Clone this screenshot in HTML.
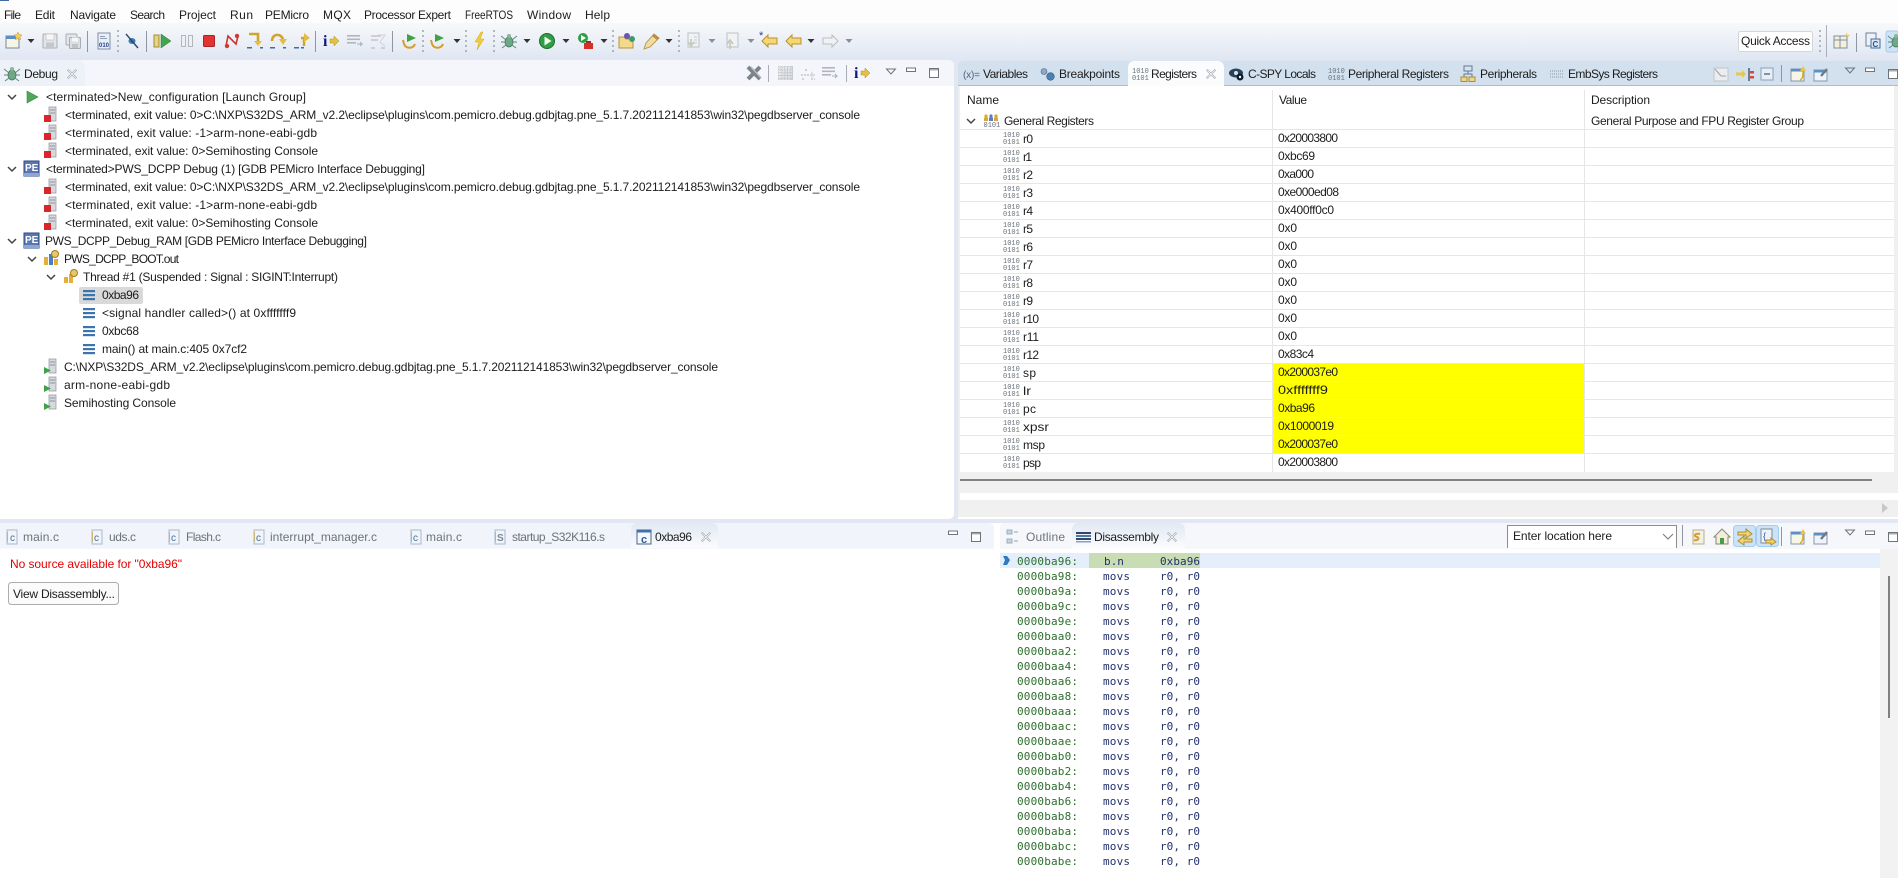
<!DOCTYPE html>
<html lang="en"><head><meta charset="utf-8"><title>Debug - S32DS</title>
<style>
html,body{margin:0;padding:0;background:#fff;width:1898px;height:878px;overflow:hidden}
svg{display:block}
text{font-family:"Liberation Sans",sans-serif;font-size:12px;fill:#1c1c1c;white-space:pre}
.g{fill:#6c7378}
.m text,text.m{font-family:"DejaVu Sans Mono",monospace;font-size:11px}
.ad{fill:#2d6e2d}.mn{fill:#22306e}
</style></head><body>
<svg xmlns="http://www.w3.org/2000/svg" width="1898" height="878" viewBox="0 0 1898 878">
<defs>
<linearGradient id="tb" x1="0" y1="0" x2="0" y2="1"><stop offset="0" stop-color="#f7f8fb"/><stop offset="1" stop-color="#dfe6f2"/></linearGradient>
<linearGradient id="at" x1="0" y1="0" x2="0" y2="1"><stop offset="0" stop-color="#e2e9f3"/><stop offset="1" stop-color="#fbfcfe"/></linearGradient>
<g id="dd"><polygon points="-3.5,-2 3.5,-2 0,2" fill="#333"/></g>
<g id="ddg"><polygon points="-3.5,-2 3.5,-2 0,2" fill="#8a8f96"/></g>
<g id="grip"><rect x="-.8" y="-11" width="1.6" height="2" fill="#a5a9af"/><rect x="-.8" y="-6" width="1.6" height="2" fill="#a5a9af"/><rect x="-.8" y="-1" width="1.6" height="2" fill="#a5a9af"/><rect x="-.8" y="4" width="1.6" height="2" fill="#a5a9af"/><rect x="-.8" y="9" width="1.6" height="2" fill="#a5a9af"/></g>
<g id="new"><rect x="-7" y="-5" width="13" height="12" fill="#f7f6e6" stroke="#74869f"/><rect x="-7" y="-5" width="13" height="3" fill="#5c8fc6"/><polygon points="5,-9 6.2,-6.4 9,-6 7,-4 7.5,-1.2 5,-2.6 2.5,-1.2 3,-4 1,-6 3.8,-6.4" fill="#f4cf55" stroke="#b9963a" stroke-width=".5"/></g>
<g id="save"><rect x="-7" y="-7" width="14" height="14" rx="1" fill="#e3e5e9" stroke="#a9adb3"/><rect x="-4" y="-7" width="8" height="6" fill="#f6f6f6" stroke="#b8bbc0" stroke-width=".6"/><rect x="-4" y="1.5" width="8" height="5.5" fill="#c4c7cc"/></g>
<g id="saveall"><rect x="-7" y="-7" width="11" height="11" rx="1" fill="#e3e5e9" stroke="#a9adb3"/><rect x="-3.5" y="-3.5" width="11" height="11" rx="1" fill="#dcdee2" stroke="#a9adb3"/><rect x="-1" y="-3.5" width="6" height="4" fill="#f6f6f6"/><rect x="-1" y="3" width="6" height="4" fill="#bfc2c7"/></g>
<g id="f010"><rect x="-6" y="-8" width="12" height="16" fill="#e9eff6" stroke="#7e8ea6"/><rect x="-4" y="-5" width="5" height="1" fill="#8fa0b5"/><rect x="-4" y="-3" width="7" height="1" fill="#8fa0b5"/><text x="-5" y="6" style="font-size:6px;font-weight:bold;fill:#25408f">010</text></g>
<g id="skip"><ellipse cx="0" cy="0" rx="3.5" ry="3" fill="#3e78b4"/><path d="M-6,-7 L6,7" stroke="#27476f" stroke-width="1.4"/></g>
<g id="resume"><rect x="-9" y="-6" width="5" height="12" fill="#e8d47c" stroke="#9c8b3c"/><polygon points="-2,-7 8,0 -2,7" fill="#44a44c" stroke="#2e7d36" stroke-width=".5"/></g>
<g id="susp"><rect x="-5.5" y="-5.5" width="4" height="11" fill="#eef0f3" stroke="#b3b7bd"/><rect x="1.5" y="-5.5" width="4" height="11" fill="#eef0f3" stroke="#b3b7bd"/></g>
<g id="stop"><rect x="-5.5" y="-5.5" width="11" height="11" rx="1" fill="#e33232" stroke="#a92424"/></g>
<g id="disc"><path d="M-6,5 L-4,-5 L4,3 L6,-5" stroke="#d2342c" stroke-width="1.6" fill="none"/><circle cx="-5" cy="5" r="2.2" fill="#cf3a30"/><circle cx="5" cy="-5" r="2.2" fill="#cf3a30"/></g>
<g id="sinto"><path d="M-6,-6 H3 V2" stroke="#d0a52b" stroke-width="2.6" fill="none"/><polygon points="-1,1 7,1 3,6" fill="#e5bd3e"/><rect x="-8" y="7" width="5" height="1.5" fill="#3b6ea8"/><rect x="5" y="7" width="3" height="1.5" fill="#3b6ea8"/></g>
<g id="sover"><path d="M-6,1 C-6,-7 4,-7 5,0" stroke="#d0a52b" stroke-width="2.6" fill="none"/><polygon points="1,-1 9,-1 5,5" fill="#e5bd3e"/><rect x="-8" y="7" width="5" height="1.5" fill="#3b6ea8"/><rect x="5" y="7" width="3" height="1.5" fill="#3b6ea8"/></g>
<g id="sret"><path d="M2,6 V-2 H-1" stroke="#d0a52b" stroke-width="2.4" fill="none"/><polygon points="1,-7 7,-2 1,2" fill="#e5bd3e" transform="translate(1,0)"/><rect x="-8" y="7" width="5" height="1.5" fill="#3b6ea8"/><rect x="-1" y="7" width="3" height="1.5" fill="#3b6ea8"/></g>
<g id="iarr"><text x="-8" y="5" style="font-family:'Liberation Serif',serif;font-size:16px;font-weight:bold;fill:#15157e">i</text><polygon points="-1,-2 3,-2 3,-5 8,0 3,5 3,2 -1,2" fill="#e2c33e" stroke="#a98e2c" stroke-width=".5"/></g>
<g id="lines"><rect x="-8" y="-6" width="13" height="1.6" fill="#b2b6bc"/><rect x="-8" y="-2.5" width="13" height="1.6" fill="#b2b6bc"/><rect x="-8" y="1" width="9" height="1.6" fill="#b2b6bc"/><path d="M2,3 h5 l-2,-2 M7,3 l-2,2" stroke="#aab0b8" fill="none"/></g>
<g id="drop"><path d="M-7,-5 H3 M-7,-1 H0 M-7,7 H-3 M3,7 H7" stroke="#c2c5ca" stroke-width="1.4"/><path d="M0,-6 L7,-6 L2,1 L7,5" stroke="#d0d2d6" fill="none"/></g>
<g id="ref"><path d="M5,3 C3,8 -4,8 -6,3 L-7,-1" stroke="#cf9f2c" stroke-width="2" fill="none"/><polygon points="-3,-7 6,-3 -3,1" fill="#3da345"/></g>
<g id="bolt"><polygon points="2,-9 -4,1 0,1 -2,9 5,-2 1,-2 4,-9" fill="#f2cf2e" stroke="#d3a71f" stroke-width=".5"/></g>
<g id="bug"><ellipse rx="4" ry="5" cy="1" fill="#6fa886" stroke="#3f7a5c" stroke-width=".8"/><circle cy="-5" r="2" fill="#8fb49a"/><path d="M-8,-5 L-3,-1 M-8,1 H-4 M-7,7 L-3,4 M8,-5 L3,-1 M8,1 H4 M7,7 L3,4" stroke="#5e8573" stroke-width=".9"/></g>
<g id="run"><circle r="7.5" fill="#2f9e44" stroke="#1f6e2f"/><polygon points="-2.5,-4.5 4.5,0 -2.5,4.5" fill="#f2f8f0"/></g>
<g id="ext"><circle cx="-2" cy="-3" r="5" fill="#2f9e44"/><polygon points="-4,-6 1,-3 -4,0" fill="#fff"/><rect x="-1" y="2" width="9" height="6" fill="#d33028"/><rect x="1" y="0" width="5" height="2" fill="#a52a22"/></g>
<g id="open"><path d="M-8,7 V-4 H-3 L-1,-2 H6 V7 Z" fill="#f3d98a" stroke="#b8923e"/><circle cx="0" cy="-5" r="3" fill="#6a55b0"/><circle cx="5" cy="-2" r="3" fill="#3f9a6c"/></g>
<g id="pen"><polygon points="-7,8 -5,2 3,-7 8,-3 -1,6" fill="#f1dda0" stroke="#b89a55"/><polygon points="3,-7 8,-3 6,-1 1,-5" fill="#b98b45"/></g>
<g id="nxt"><rect x="-5" y="-8" width="11" height="14" fill="#f0f2f4" stroke="#bcc2c8"/><path d="M-2,-2 V3 M-5,1 L-2,5 L1,1" stroke="#c3c8b8" stroke-width="1.6" fill="none"/><path d="M1,-4 H4 M1,-1 H4 M1,2 H4" stroke="#c4c9ce"/></g>
<g id="prv"><rect x="-5" y="-8" width="11" height="14" fill="#f0f2f4" stroke="#bcc2c8"/><path d="M-2,8 V1 M-5,3 L-2,-1 L1,3" stroke="#c3c8b8" stroke-width="1.6" fill="none"/></g>
<g id="last"><polygon points="8,-3 -1,-3 -1,-6 -7,0 -1,6 -1,3 8,3" fill="#f5d874" stroke="#b8922e"/><text x="-10" y="-2" style="font-size:11px;fill:#26457e">*</text></g>
<g id="back"><polygon points="8,-3 -1,-3 -1,-6 -7,0 -1,6 -1,3 8,3" fill="#f5d874" stroke="#b8922e"/></g>
<g id="fwd"><polygon points="-8,-3 1,-3 1,-6 7,0 1,6 1,3 -8,3" fill="#f1f2f4" stroke="#b9bdc3"/></g>
<g id="x"><path d="M-4.5,-3.5 L-3.5,-4.5 L0,-1 L3.5,-4.5 L4.5,-3.5 L1,0 L4.5,3.5 L3.5,4.5 L0,1 L-3.5,4.5 L-4.5,3.5 L-1,0 Z" fill="#fcfcfd" stroke="#a9aeb4" stroke-width=".7"/></g>
<g id="tri"><polygon points="-4.5,-3 4.5,-3 0,2" fill="none" stroke="#6f747a"/></g>
<g id="min"><rect x="-4.5" y="-2" width="9" height="3.5" fill="#fff" stroke="#6f747a"/></g>
<g id="max"><rect x="-4.5" y="-4.5" width="9" height="9" fill="#fff" stroke="#6f747a"/><rect x="-4.5" y="-4.5" width="9" height="2" fill="#6f747a" opacity=".6"/></g>
<g id="rmall"><path d="M-6,-6 L6,6 M6,-6 L-6,6" stroke="#7d838a" stroke-width="4"/><path d="M-3,-6 L7,5" stroke="#b4b9bf" stroke-width="1.5"/></g>
<g id="hatch"><rect x="-7" y="-7" width="15" height="14" fill="#c7cbcf"/><path d="M-7,-5 H8 M-7,-2 H8 M-7,1 H8 M-7,4 H8 M-5,-7 V7 M-2,-7 V7 M1,-7 V7 M4,-7 V7" stroke="#f5f6f9" stroke-width=".9" stroke-dasharray="1.5 1"/></g>
<g id="tabarr"><path d="M-7,2 H7 M-2,-4 V-1 M-6,6 H-3 M3,6 H7" stroke="#b9bdc2" stroke-width="1.3" fill="none" stroke-dasharray="2 1"/><polygon points="3,-2 7,2 3,5" fill="#d9dbde"/></g>
<g id="rdbox"><rect x="-7" y="-6" width="12" height="12" fill="#e8eef5" stroke="#8ca0b8"/><rect x="-4" y="-.7" width="6" height="1.4" fill="#546a86"/></g>
<g id="tarrow"><rect x="-9" y="-1.5" width="7" height="3" fill="#e5c84e"/><polygon points="-3,-4 1,0 -3,4" fill="#e5c84e"/><rect x="3" y="-6" width="2" height="13" fill="#697d95"/><rect x="5" y="-3" width="4" height="2.5" fill="#d04b3f"/><rect x="5" y="2" width="4" height="2.5" fill="#d04b3f"/></g>
<g id="nwin"><rect x="-7" y="-5" width="13" height="12" fill="#f7f6e6" stroke="#8396ad"/><rect x="-7" y="-5" width="13" height="2.5" fill="#5c8fc6"/><path d="M2,6 C5,5 5,1 5,-3" stroke="#d9b034" stroke-width="1.6" fill="none"/><polygon points="2,-3 5,-8 8,-3" fill="#eac34a"/></g>
<g id="pinw"><rect x="-7" y="-4" width="13" height="11" fill="#eef4fa" stroke="#8396ad"/><rect x="-7" y="-4" width="13" height="2.5" fill="#5c8fc6"/><path d="M0,2 L6,-5" stroke="#727880" stroke-width="2.4"/></g>
<g id="file"><rect x="-5" y="-7" width="10" height="14" fill="#f2f5f8" stroke="#a9b8ca"/><rect x="-5" y="-5" width="1" height="10" fill="#c8b777"/></g>
<g id="activef"><rect x="-7" y="-7" width="14" height="14" fill="#f4f7fb" stroke="#49688f"/><rect x="-7" y="-7" width="14" height="2.5" fill="#3e72ad"/></g>
<g id="reg"><text x="-7.5" y="-.8" style="font-family:'Liberation Mono',monospace;font-size:7px;fill:#69727e">1010</text><text x="-7.5" y="5.8" style="font-family:'Liberation Mono',monospace;font-size:7px;fill:#69727e">0101</text></g>
<g id="grp"><circle cx="-5" cy="-5" r="1.6" fill="#d8a73b"/><circle cx="0" cy="-5" r="1.6" fill="#5b80b6"/><circle cx="5" cy="-5" r="1.6" fill="#d8a73b"/><rect x="-7" y="-3.5" width="4" height="3.5" fill="#d8a73b"/><rect x="-2" y="-3.5" width="4" height="3.5" fill="#5b80b6"/><rect x="3" y="-3.5" width="4" height="3.5" fill="#d8a73b"/><text x="-7.5" y="6" style="font-family:'Liberation Mono',monospace;font-size:7px;fill:#69727e">0101</text></g>
<g id="chev"><polyline points="-4,-2 0,2 4,-2" fill="none" stroke="#444" stroke-width="1.5"/></g>
<g id="tgreen"><polygon points="-5,-6 6,0 -5,6" fill="#4ea656" stroke="#3c8a46" stroke-width=".6"/></g>
<g id="tred"><rect x="-2" y="-8" width="7" height="14" fill="#d6d9dd" stroke="#8d9399" stroke-width=".7"/><path d="M-1,-5 H4 M-1,-2 H4" stroke="#8d9399"/><rect x="-7" y="0" width="7" height="7" fill="#d8262c"/></g>
<g id="tgrn"><rect x="-2" y="-8" width="7" height="14" fill="#d6d9dd" stroke="#8d9399" stroke-width=".7"/><path d="M-1,-5 H4 M-1,-2 H4" stroke="#8d9399"/><polygon points="-7,0 0,3.5 -7,7" fill="#41a04a"/></g>
<g id="pe"><rect x="-8" y="-8" width="15" height="15" fill="#5b78b4" stroke="#2d4a85"/><text x="-7" y="2" style="font-size:10px;font-weight:bold;fill:#fff">PE</text><rect x="-8" y="4" width="15" height="3" fill="#8ea6d0"/></g>
<g id="proc"><rect x="-7" y="-2" width="4" height="8" fill="#e4b03a"/><rect x="-2" y="-5" width="4" height="11" fill="#4d7fbc"/><rect x="3" y="0" width="4" height="6" fill="#e4b03a"/><circle cx="4" cy="-5" r="3.5" fill="#e9c66a" stroke="#a47b1e"/></g>
<g id="thr"><rect x="-6" y="0" width="4" height="6" fill="#e4b03a"/><rect x="-1" y="-3" width="4" height="9" fill="#e4b03a"/><circle cx="4" cy="-4" r="3.5" fill="#e9c66a" stroke="#a47b1e"/></g>
<g id="frame"><rect x="-6" y="-5" width="12" height="2.2" fill="#3e74ac"/><rect x="-6" y="-1" width="12" height="2.2" fill="#3e74ac"/><rect x="-6" y="3" width="12" height="2.2" fill="#3e74ac"/></g>
<g id="persp"><rect x="-7" y="-5" width="13" height="12" fill="#f5f0d8" stroke="#7e8ea6"/><path d="M-7,-1 H6 M-1,-5 V7" stroke="#7e8ea6"/><polygon points="5,-9 6.2,-6.4 9,-6 7,-4 5,-5" fill="#f0ca50"/></g>
<g id="pc"><rect x="-7" y="-8" width="10" height="13" fill="#eef2f7" stroke="#6e7f96"/><rect x="-2" y="-2" width="9" height="9" fill="#dbe7f4" stroke="#3e6fa6"/><text x="-.5" y="6" style="font-size:8px;font-weight:bold;fill:#23548c">C</text></g>
<g id="src"><rect x="-4" y="-7" width="11" height="14" fill="#f2efe4" stroke="#b9ad8a"/><path d="M3,-3 C-2,-4 -4,-1 0,0 C3,1 1,4 -3,3" stroke="#d39f2d" stroke-width="2" fill="none"/></g>
<g id="home"><polygon points="0,-8 8,0 6,0 6,7 -6,7 -6,0 -8,0" fill="#f1eee0" stroke="#8a8a6a"/><rect x="-2" y="1" width="4" height="6" fill="#4b9d45"/></g>
<g id="sync"><polygon points="-8,-3 0,-3 0,-6 6,-1 0,3 0,0 -8,0" fill="#f3d46e" stroke="#b08c2e" transform="translate(1,-2)"/><polygon points="8,3 0,3 0,0 -6,5 0,9 0,6 8,6" fill="#f3d46e" stroke="#b08c2e" transform="translate(-1,-1)"/></g>
<g id="syncd"><rect x="-6" y="-8" width="11" height="14" fill="#eef2f7" stroke="#7a8ba0"/><text x="-4" y="2" style="font-size:9px;fill:#2b5ea0">{</text><polygon points="-1,3 4,3 4,1 9,5 4,8 4,6 -1,6" fill="#f3d46e" stroke="#b08c2e"/></g>
<g id="outl"><rect x="-6" y="-7" width="5" height="4" fill="#c8d3df" stroke="#9daebd"/><rect x="-6" y="2" width="5" height="4" fill="#c8d3df" stroke="#9daebd"/><path d="M1,-5 H5 M1,4 H5" stroke="#b3bdc8" stroke-width="1.5"/></g>
<g id="dis"><rect x="-7" y="-5" width="15" height="2" fill="#33456b"/><rect x="-7" y="-2" width="15" height="2" fill="#4d79a8"/><rect x="-7" y="1" width="15" height="2" fill="#33456b"/><rect x="-7" y="4" width="15" height="1.5" fill="#8aa0bd"/></g>
<g id="bp"><circle cx="-3" cy="-2.5" r="3" fill="#90a8c4" stroke="#4d6d93" stroke-width=".6"/><circle cx="3.5" cy="2.5" r="3.8" fill="#4b80b0" stroke="#2e5a85" stroke-width=".6"/></g>
<g id="eye"><ellipse cy="-1" rx="7" ry="4.5" fill="#28415c"/><circle cy="-1" r="2" fill="#dce6ef"/><circle cx="4" cy="3" r="3.5" fill="#0e1c2c"/><circle cx="4" cy="3" r="1.2" fill="#fff"/></g>
<g id="perif"><rect x="-4" y="-8" width="8" height="5" fill="#d8e3ef" stroke="#5f7a98"/><path d="M0,-3 V0 M-4,3 V0 H4 V3" stroke="#5f7a98" fill="none"/><rect x="-7" y="3" width="6" height="4.5" fill="#f2d783" stroke="#ae8a30"/><rect x="1" y="3" width="6" height="4.5" fill="#f2d783" stroke="#ae8a30"/></g>
<g id="emb"><path d="M-7,-3 H7 M-7,0 H7 M-7,3 H7" stroke="#9298a0" stroke-width="1.1" stroke-dasharray="1 1"/></g>
<g id="bgtbl"><rect x="-7" y="-6" width="14" height="13" fill="#ecedef" stroke="#c0c4c9"/><path d="M-6,-5 L0,2 M0,2 H5" stroke="#9aa0a8"/></g>
</defs>

<!-- base -->
<rect width="1898" height="878" fill="#fff"/>
<rect y="0" width="1898" height="23" fill="#fdfdfd"/>
<rect x="0" y="0" width="9" height="1" fill="#3e6aa8"/>
<rect y="23" width="1898" height="500" fill="#e1e7f3"/>
<rect y="23" width="1898" height="38" fill="url(#tb)"/>

<!-- menu -->
<text x="4" y="19" textLength="17">File</text>
<text x="35" y="19" textLength="20">Edit</text>
<text x="70" y="19" textLength="46">Navigate</text>
<text x="130" y="19" textLength="35">Search</text>
<text x="179" y="19" textLength="37">Project</text>
<text x="230" y="19" textLength="23">Run</text>
<text x="265" y="19" textLength="44">PEMicro</text>
<text x="323" y="19" textLength="28">MQX</text>
<text x="364" y="19" textLength="87">Processor Expert</text>
<text x="465" y="19" textLength="48" lengthAdjust="spacingAndGlyphs">FreeRTOS</text>
<text x="527" y="19" textLength="44">Window</text>
<text x="585" y="19" textLength="25">Help</text>

<!-- main toolbar -->
<use href="#new" x="13" y="41"/><use href="#dd" x="31" y="41"/><use href="#save" x="50" y="41"/><use href="#saveall" x="73" y="41"/>
<rect x="87" y="31" width="1" height="21" fill="#8f96a0"/>
<use href="#f010" x="104" y="41"/><use href="#grip" x="118" y="41"/><use href="#skip" x="132" y="41"/>
<rect x="146" y="31" width="1" height="21" fill="#8f96a0"/>
<use href="#resume" x="163" y="41"/><use href="#susp" x="187" y="41"/><use href="#stop" x="209" y="41"/><use href="#disc" x="232" y="41"/>
<use href="#sinto" x="255" y="40"/><use href="#sover" x="278" y="40"/><use href="#sret" x="302" y="40"/>
<rect x="315" y="31" width="1" height="21" fill="#8f96a0"/>
<use href="#iarr" x="331" y="41"/><use href="#lines" x="355" y="41"/><use href="#drop" x="378" y="41"/>
<rect x="392" y="31" width="1" height="21" fill="#8f96a0"/>
<use href="#ref" x="410" y="41"/><use href="#grip" x="423" y="41"/><use href="#ref" x="438" y="41"/><use href="#dd" x="457" y="41"/><use href="#grip" x="466" y="41"/>
<use href="#bolt" x="479" y="41"/><use href="#grip" x="494" y="41"/>
<use href="#bug" x="509" y="41"/><use href="#dd" x="527" y="41"/><use href="#run" x="547" y="41"/><use href="#dd" x="566" y="41"/>
<use href="#ext" x="585" y="41"/><use href="#dd" x="604" y="41"/><use href="#grip" x="613" y="41"/>
<use href="#open" x="627" y="41"/><use href="#pen" x="651" y="41"/><use href="#dd" x="669" y="41"/><use href="#grip" x="679" y="41"/>
<use href="#nxt" x="693" y="41"/><use href="#ddg" x="712" y="41"/><use href="#prv" x="732" y="41"/><use href="#ddg" x="751" y="41"/>
<use href="#last" x="769" y="41"/><use href="#back" x="793" y="41"/><use href="#dd" x="811" y="41"/><use href="#fwd" x="831" y="41"/><use href="#ddg" x="849" y="41"/>

<rect x="1738.5" y="31.5" width="74" height="20" rx="2" fill="#fff" stroke="#d3d6db"/>
<text x="1741" y="45" textLength="69">Quick Access</text>
<use href="#grip" x="1820" y="41"/>
<rect x="1826" y="25" width="1" height="32" fill="#aab0b8"/>
<use href="#persp" x="1841" y="41"/>
<rect x="1856" y="33" width="1" height="19" fill="#8f96a0"/>
<use href="#pc" x="1873" y="41"/>
<rect x="1886" y="31" width="12" height="21" rx="2" fill="#cde3f7" stroke="#a9cbe8"/>
<use href="#bug" x="1896" y="41"/>

<!-- Debug pane -->
<path d="M0,60 H948 Q954,60 954,66 V513 Q954,519 948,519 H0 Z" fill="#fff"/>
<path d="M0,60 H948 Q954,60 954,66 V86 H0 Z" fill="#f4f6fb"/>
<path d="M0,60 H76 Q85,60 85,69 V86 H0 Z" fill="#edf1f8"/>
<use href="#bug" x="12" y="74"/>
<text x="24" y="78" textLength="34">Debug</text>
<use href="#x" x="72" y="74"/>
<use href="#rmall" x="754" y="73"/>
<rect x="768" y="65" width="1" height="17" fill="#a8adb3"/>
<use href="#hatch" x="785" y="73"/><use href="#tabarr" x="808" y="73"/><use href="#lines" x="830" y="73"/>
<rect x="846" y="65" width="1" height="17" fill="#a8adb3"/>
<use href="#iarr" x="862" y="73"/><use href="#tri" x="891" y="72"/><use href="#min" x="911" y="70"/><use href="#max" x="934" y="73"/>

<!-- tree -->
<use href="#chev" x="12" y="97"/><use href="#tgreen" x="32" y="97"/>
<text x="46" y="101" textLength="260">&lt;terminated&gt;New_configuration [Launch Group]</text>
<use href="#tred" x="51" y="115"/><text x="65" y="119" textLength="795">&lt;terminated, exit value: 0&gt;C:\NXP\S32DS_ARM_v2.2\eclipse\plugins\com.pemicro.debug.gdbjtag.pne_5.1.7.202112141853\win32\pegdbserver_console</text>
<use href="#tred" x="51" y="133"/><text x="65" y="137" textLength="252">&lt;terminated, exit value: -1&gt;arm-none-eabi-gdb</text>
<use href="#tred" x="51" y="151"/><text x="65" y="155" textLength="253">&lt;terminated, exit value: 0&gt;Semihosting Console</text>
<use href="#chev" x="12" y="169"/><use href="#pe" x="32" y="169"/>
<text x="46" y="173" textLength="379">&lt;terminated&gt;PWS_DCPP Debug (1) [GDB PEMicro Interface Debugging]</text>
<use href="#tred" x="51" y="187"/><text x="65" y="191" textLength="795">&lt;terminated, exit value: 0&gt;C:\NXP\S32DS_ARM_v2.2\eclipse\plugins\com.pemicro.debug.gdbjtag.pne_5.1.7.202112141853\win32\pegdbserver_console</text>
<use href="#tred" x="51" y="205"/><text x="65" y="209" textLength="252">&lt;terminated, exit value: -1&gt;arm-none-eabi-gdb</text>
<use href="#tred" x="51" y="223"/><text x="65" y="227" textLength="253">&lt;terminated, exit value: 0&gt;Semihosting Console</text>
<use href="#chev" x="12" y="241"/><use href="#pe" x="32" y="241"/>
<text x="45" y="245" textLength="322">PWS_DCPP_Debug_RAM [GDB PEMicro Interface Debugging]</text>
<use href="#chev" x="32" y="259"/><use href="#proc" x="51" y="259"/>
<text x="64" y="263" textLength="115">PWS_DCPP_BOOT.out</text>
<use href="#chev" x="51" y="277"/><use href="#thr" x="70" y="277"/>
<text x="83" y="281" textLength="255">Thread #1 (Suspended : Signal : SIGINT:Interrupt)</text>
<rect x="79" y="287" width="64" height="17" rx="2" fill="#d9d9d9"/>
<use href="#frame" x="89" y="295"/><text x="102" y="299" textLength="37">0xba96</text>
<use href="#frame" x="89" y="313"/><text x="102" y="317" textLength="194">&lt;signal handler called&gt;() at 0xfffffff9</text>
<use href="#frame" x="89" y="331"/><text x="102" y="335" textLength="37">0xbc68</text>
<use href="#frame" x="89" y="349"/><text x="102" y="353" textLength="145">main() at main.c:405 0x7cf2</text>
<use href="#tgrn" x="51" y="367"/><text x="64" y="371" textLength="654">C:\NXP\S32DS_ARM_v2.2\eclipse\plugins\com.pemicro.debug.gdbjtag.pne_5.1.7.202112141853\win32\pegdbserver_console</text>
<use href="#tgrn" x="51" y="385"/><text x="64" y="389" textLength="106">arm-none-eabi-gdb</text>
<use href="#tgrn" x="51" y="403"/><text x="64" y="407" textLength="112">Semihosting Console</text>

<!-- Registers pane -->
<path d="M958,66 Q958,61 964,61 H1898 V517 H958 Z" fill="#f0f0f0"/>
<path d="M958,66 Q958,61 964,61 H1898 V86 H958 Z" fill="#d3e1ef"/>
<rect x="958" y="85" width="940" height="1" fill="#aebccd"/>
<path d="M1128,86 V68 Q1128,61 1135,61 H1217 Q1224,61 1224,68 V86 Z" fill="#fafcfe"/>
<rect x="960" y="86" width="934" height="386" fill="#fff"/>
<rect x="960" y="493" width="938" height="7" fill="#fff"/>
<rect y="517" x="958" width="940" height="2" fill="#fff"/>
<text x="963" y="78" textLength="17" style="font-size:10px;fill:#52647a">(x)=</text>
<text x="983" y="78" textLength="45">Variables</text>
<use href="#bp" x="1047" y="74"/><text x="1059" y="78" textLength="61">Breakpoints</text>
<use href="#reg" x="1139.5" y="74"/><text x="1151" y="78" textLength="46">Registers</text><use href="#x" x="1211" y="74"/>
<use href="#eye" x="1236" y="74"/><text x="1248" y="78" textLength="68">C-SPY Locals</text>
<use href="#reg" x="1335.5" y="74"/><text x="1348" y="78" textLength="101">Peripheral Registers</text>
<use href="#perif" x="1468" y="74"/><text x="1480" y="78" textLength="57">Peripherals</text>
<use href="#emb" x="1557" y="74"/><text x="1568" y="78" textLength="90">EmbSys Registers</text>
<use href="#bgtbl" x="1721" y="74"/><use href="#tarrow" x="1745" y="74"/><use href="#rdbox" x="1768" y="74"/>
<rect x="1781" y="65" width="1" height="17" fill="#8f96a0"/>
<use href="#nwin" x="1798" y="74"/><use href="#pinw" x="1821" y="74"/>
<use href="#tri" x="1850" y="71"/><use href="#min" x="1870" y="70"/><use href="#max" x="1893" y="74"/>

<text x="967" y="104" textLength="32">Name</text><text x="1279" y="104" textLength="28">Value</text><text x="1591" y="104" textLength="59">Description</text>
<use href="#chev" x="971" y="121"/><use href="#grp" x="991" y="121"/>
<text x="1004" y="125" textLength="90">General Registers</text>
<text x="1591" y="125" textLength="213">General Purpose and FPU Register Group</text>
<rect x="1272" y="363" width="313" height="91" fill="#ffff00"/>
<g fill="#e6e6e6">
<rect x="960" y="129" width="934" height="1"/><rect x="960" y="147" width="934" height="1"/><rect x="960" y="165" width="934" height="1"/><rect x="960" y="183" width="934" height="1"/><rect x="960" y="201" width="934" height="1"/><rect x="960" y="219" width="934" height="1"/><rect x="960" y="237" width="934" height="1"/><rect x="960" y="255" width="934" height="1"/><rect x="960" y="273" width="934" height="1"/><rect x="960" y="291" width="934" height="1"/><rect x="960" y="309" width="934" height="1"/><rect x="960" y="327" width="934" height="1"/><rect x="960" y="345" width="934" height="1"/><rect x="960" y="363" width="934" height="1"/><rect x="960" y="381" width="934" height="1"/><rect x="960" y="399" width="934" height="1"/><rect x="960" y="417" width="934" height="1"/><rect x="960" y="435" width="934" height="1"/><rect x="960" y="453" width="934" height="1"/>
<rect x="1272" y="90" width="1" height="382"/><rect x="1584" y="90" width="1" height="382"/>
</g>
<use href="#reg" x="1010.5" y="138"/><text x="1023" y="143" textLength="10">r0</text><text x="1278" y="142" textLength="60">0x20003800</text>
<use href="#reg" x="1010.5" y="156"/><text x="1023" y="161" textLength="9">r1</text><text x="1278" y="160" textLength="37">0xbc69</text>
<use href="#reg" x="1010.5" y="174"/><text x="1023" y="179" textLength="10">r2</text><text x="1278" y="178" textLength="36">0xa000</text>
<use href="#reg" x="1010.5" y="192"/><text x="1023" y="197" textLength="10">r3</text><text x="1278" y="196" textLength="61">0xe000ed08</text>
<use href="#reg" x="1010.5" y="210"/><text x="1023" y="215" textLength="10">r4</text><text x="1278" y="214" textLength="56">0x400ff0c0</text>
<use href="#reg" x="1010.5" y="228"/><text x="1023" y="233" textLength="10">r5</text><text x="1278" y="232" textLength="19">0x0</text>
<use href="#reg" x="1010.5" y="246"/><text x="1023" y="251" textLength="10">r6</text><text x="1278" y="250" textLength="19">0x0</text>
<use href="#reg" x="1010.5" y="264"/><text x="1023" y="269" textLength="10">r7</text><text x="1278" y="268" textLength="19">0x0</text>
<use href="#reg" x="1010.5" y="282"/><text x="1023" y="287" textLength="10">r8</text><text x="1278" y="286" textLength="19">0x0</text>
<use href="#reg" x="1010.5" y="300"/><text x="1023" y="305" textLength="10">r9</text><text x="1278" y="304" textLength="19">0x0</text>
<use href="#reg" x="1010.5" y="318"/><text x="1023" y="323" textLength="16">r10</text><text x="1278" y="322" textLength="19">0x0</text>
<use href="#reg" x="1010.5" y="336"/><text x="1023" y="341" textLength="16">r11</text><text x="1278" y="340" textLength="19">0x0</text>
<use href="#reg" x="1010.5" y="354"/><text x="1023" y="359" textLength="16">r12</text><text x="1278" y="358" textLength="36">0x83c4</text>
<use href="#reg" x="1010.5" y="372"/><text x="1023" y="377" textLength="13">sp</text><text x="1278" y="376" textLength="60">0x200037e0</text>
<use href="#reg" x="1010.5" y="390"/><text x="1023" y="395" textLength="8" lengthAdjust="spacingAndGlyphs">lr</text><text x="1278" y="394" textLength="50" lengthAdjust="spacingAndGlyphs">0xfffffff9</text>
<use href="#reg" x="1010.5" y="408"/><text x="1023" y="413" textLength="13">pc</text><text x="1278" y="412" textLength="37">0xba96</text>
<use href="#reg" x="1010.5" y="426"/><text x="1023" y="431" textLength="26" lengthAdjust="spacingAndGlyphs">xpsr</text><text x="1278" y="430" textLength="56">0x1000019</text>
<use href="#reg" x="1010.5" y="444"/><text x="1023" y="449" textLength="22">msp</text><text x="1278" y="448" textLength="60">0x200037e0</text>
<use href="#reg" x="1010.5" y="462"/><text x="1023" y="467" textLength="18">psp</text><text x="1278" y="466" textLength="60">0x20003800</text>
<rect x="960" y="479" width="912" height="2" fill="#808080"/>
<polygon points="1882,503 1888,508 1882,513" fill="#c8c8c8"/>

<!-- bottom-left editor -->
<path d="M0,523 H988 Q994,523 994,528 V878 H0 Z" fill="#fff"/>
<path d="M0,523 H988 Q994,523 994,528 V549 H0 Z" fill="#f1f4fa"/>
<path d="M631,549 V530 Q631,523 638,523 H711 Q718,523 718,530 V549 Z" fill="url(#at)"/>
<rect x="0" y="548" width="994" height="1" fill="#f7f8fb"/>
<use href="#file" x="12" y="537"/><text x="9" y="541" style="font-size:10px;fill:#3f6ea7" dx="1">c</text><text x="23" y="541" textLength="36" class="g">main.c</text>
<use href="#file" x="97" y="537"/><text x="94" y="541" style="font-size:10px;fill:#3f6ea7">c</text><text x="109" y="541" textLength="27" class="g">uds.c</text>
<use href="#file" x="174" y="537"/><text x="171" y="541" style="font-size:10px;fill:#3f6ea7">c</text><text x="186" y="541" textLength="35" class="g">Flash.c</text>
<use href="#file" x="259" y="537"/><text x="256" y="541" style="font-size:10px;fill:#3f6ea7">c</text><text x="270" y="541" textLength="107" class="g">interrupt_manager.c</text>
<use href="#file" x="416" y="537"/><text x="413" y="541" style="font-size:10px;fill:#3f6ea7">c</text><text x="426" y="541" textLength="36" class="g">main.c</text>
<use href="#file" x="500" y="537"/><text x="497" y="541" style="font-size:10px;fill:#76889c;font-weight:bold">S</text><text x="512" y="541" textLength="93" class="g">startup_S32K116.s</text>
<use href="#activef" x="644" y="537"/><text x="641" y="543" style="font-size:11px;font-weight:bold;fill:#2b5d96">c</text><text x="655" y="541" textLength="37">0xba96</text><use href="#x" x="706" y="537"/>
<use href="#min" x="953" y="533"/><use href="#max" x="976" y="537"/>
<text x="10" y="568" textLength="172" style="fill:#e60000">No source available for "0xba96"</text>
<rect x="8.5" y="582.5" width="110" height="22" rx="3" fill="#fbfbfb" stroke="#adadad"/>
<text x="13" y="598" textLength="102">View Disassembly...</text>

<!-- Disassembly pane -->
<rect x="1000" y="523" width="898" height="355" fill="#fff"/>
<path d="M1000,528 Q1000,523 1006,523 H1898 V549 H1000 Z" fill="#f6f7fb"/>
<path d="M1072,549 V530 Q1072,523 1079,523 H1178 Q1185,523 1185,530 V549 Z" fill="url(#at)"/>
<use href="#outl" x="1013" y="537"/><text x="1026" y="541" textLength="39" class="g">Outline</text>
<use href="#dis" x="1083" y="537"/><text x="1094" y="541" textLength="65">Disassembly</text><use href="#x" x="1172" y="537"/>
<path d="M1507.5,548 V525.5 H1676.5 V548" fill="#fff" stroke="#8d8d8d"/>
<text x="1513" y="540" textLength="99">Enter location here</text>
<polyline points="1663,534 1668,539 1673,534" fill="none" stroke="#777"/>
<rect x="1682" y="525" width="1" height="21" fill="#8f96a0"/>
<use href="#src" x="1697" y="537"/><use href="#home" x="1722" y="537"/>
<rect x="1733.5" y="525.5" width="22" height="21" rx="3" fill="#cbe3f8" stroke="#a5cdee"/>
<rect x="1756.5" y="525.5" width="22" height="21" rx="3" fill="#cbe3f8" stroke="#a5cdee"/>
<use href="#sync" x="1745" y="537"/><use href="#syncd" x="1767" y="537"/>
<rect x="1781" y="527" width="1" height="19" fill="#8f96a0"/>
<use href="#nwin" x="1798" y="537"/><use href="#pinw" x="1821" y="537"/>
<use href="#tri" x="1850" y="533"/><use href="#min" x="1870" y="533"/><use href="#max" x="1893" y="537"/>

<rect x="1880" y="549" width="18" height="329" fill="#f2f2f2"/>
<rect x="1888" y="576" width="2" height="142" fill="#808080"/>
<rect x="1000" y="553" width="880" height="15" fill="#e5effb"/>
<rect x="1089" y="553" width="111" height="15" fill="#c8ddb4"/>
<polygon points="1003,556 1007,556 1010,560 1007,565 1003,565 1005,560" fill="#2d7ac0"/>
<g class="m">
<text class="ad" x="1017" y="565" textLength="61">0000ba96:</text><text class="mn" x="1104" y="565">b.n</text><text class="mn" x="1160" y="565" textLength="40">0xba96</text>
<text class="ad" x="1017" y="580" textLength="61">0000ba98:</text><text class="mn" x="1103" y="580" textLength="27">movs</text><text class="mn" x="1160" y="580" textLength="40">r0, r0</text>
<text class="ad" x="1017" y="595" textLength="61">0000ba9a:</text><text class="mn" x="1103" y="595" textLength="27">movs</text><text class="mn" x="1160" y="595" textLength="40">r0, r0</text>
<text class="ad" x="1017" y="610" textLength="61">0000ba9c:</text><text class="mn" x="1103" y="610" textLength="27">movs</text><text class="mn" x="1160" y="610" textLength="40">r0, r0</text>
<text class="ad" x="1017" y="625" textLength="61">0000ba9e:</text><text class="mn" x="1103" y="625" textLength="27">movs</text><text class="mn" x="1160" y="625" textLength="40">r0, r0</text>
<text class="ad" x="1017" y="640" textLength="61">0000baa0:</text><text class="mn" x="1103" y="640" textLength="27">movs</text><text class="mn" x="1160" y="640" textLength="40">r0, r0</text>
<text class="ad" x="1017" y="655" textLength="61">0000baa2:</text><text class="mn" x="1103" y="655" textLength="27">movs</text><text class="mn" x="1160" y="655" textLength="40">r0, r0</text>
<text class="ad" x="1017" y="670" textLength="61">0000baa4:</text><text class="mn" x="1103" y="670" textLength="27">movs</text><text class="mn" x="1160" y="670" textLength="40">r0, r0</text>
<text class="ad" x="1017" y="685" textLength="61">0000baa6:</text><text class="mn" x="1103" y="685" textLength="27">movs</text><text class="mn" x="1160" y="685" textLength="40">r0, r0</text>
<text class="ad" x="1017" y="700" textLength="61">0000baa8:</text><text class="mn" x="1103" y="700" textLength="27">movs</text><text class="mn" x="1160" y="700" textLength="40">r0, r0</text>
<text class="ad" x="1017" y="715" textLength="61">0000baaa:</text><text class="mn" x="1103" y="715" textLength="27">movs</text><text class="mn" x="1160" y="715" textLength="40">r0, r0</text>
<text class="ad" x="1017" y="730" textLength="61">0000baac:</text><text class="mn" x="1103" y="730" textLength="27">movs</text><text class="mn" x="1160" y="730" textLength="40">r0, r0</text>
<text class="ad" x="1017" y="745" textLength="61">0000baae:</text><text class="mn" x="1103" y="745" textLength="27">movs</text><text class="mn" x="1160" y="745" textLength="40">r0, r0</text>
<text class="ad" x="1017" y="760" textLength="61">0000bab0:</text><text class="mn" x="1103" y="760" textLength="27">movs</text><text class="mn" x="1160" y="760" textLength="40">r0, r0</text>
<text class="ad" x="1017" y="775" textLength="61">0000bab2:</text><text class="mn" x="1103" y="775" textLength="27">movs</text><text class="mn" x="1160" y="775" textLength="40">r0, r0</text>
<text class="ad" x="1017" y="790" textLength="61">0000bab4:</text><text class="mn" x="1103" y="790" textLength="27">movs</text><text class="mn" x="1160" y="790" textLength="40">r0, r0</text>
<text class="ad" x="1017" y="805" textLength="61">0000bab6:</text><text class="mn" x="1103" y="805" textLength="27">movs</text><text class="mn" x="1160" y="805" textLength="40">r0, r0</text>
<text class="ad" x="1017" y="820" textLength="61">0000bab8:</text><text class="mn" x="1103" y="820" textLength="27">movs</text><text class="mn" x="1160" y="820" textLength="40">r0, r0</text>
<text class="ad" x="1017" y="835" textLength="61">0000baba:</text><text class="mn" x="1103" y="835" textLength="27">movs</text><text class="mn" x="1160" y="835" textLength="40">r0, r0</text>
<text class="ad" x="1017" y="850" textLength="61">0000babc:</text><text class="mn" x="1103" y="850" textLength="27">movs</text><text class="mn" x="1160" y="850" textLength="40">r0, r0</text>
<text class="ad" x="1017" y="865" textLength="61">0000babe:</text><text class="mn" x="1103" y="865" textLength="27">movs</text><text class="mn" x="1160" y="865" textLength="40">r0, r0</text>
</g>
</svg>
</body></html>
